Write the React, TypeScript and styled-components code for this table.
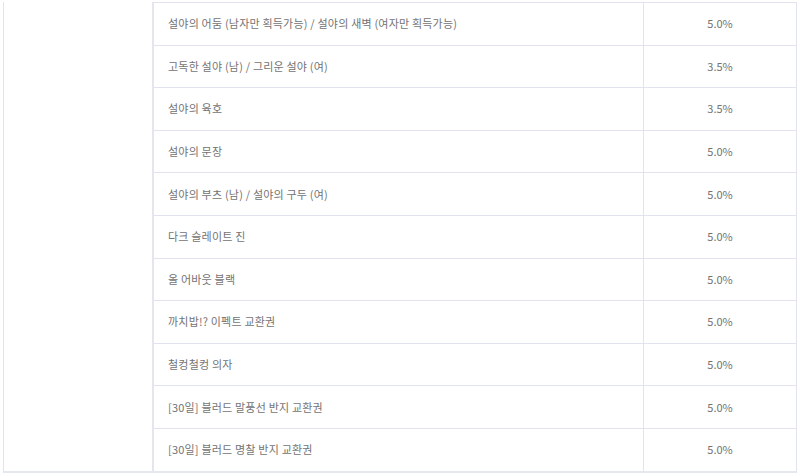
import styled, { createGlobalStyle } from "styled-components";

const GlobalStyle = createGlobalStyle`
  html, body {
    margin: 0;
    padding: 0;
    background: #fff;
  }
  body {
    font-family: "Noto Sans CJK KR", "Noto Sans", sans-serif;
  }
`;

type rateType = { name: string, rate: string }

const rates: rateType[] = [
  { name: "설야의 어둠 (남자만 획득가능) / 설야의 새벽 (여자만 획득가능)", rate: "5.0%" },
  { name: "고독한 설야 (남) / 그리운 설야 (여)", rate: "3.5%" },
  { name: "설야의 육호", rate: "3.5%" },
  { name: "설야의 문장", rate: "5.0%" },
  { name: "설야의 부츠 (남) / 설야의 구두 (여)", rate: "5.0%" },
  { name: "다크 슬레이트 진", rate: "5.0%" },
  { name: "올 어바웃 블랙", rate: "5.0%" },
  { name: "까치밥!? 이펙트 교환권", rate: "5.0%" },
  { name: "철컹철컹 의자", rate: "5.0%" },
  { name: "[30일] 블러드 말풍선 반지 교환권", rate: "5.0%" },
  { name: "[30일] 블러드 명찰 반지 교환권", rate: "5.0%" },
];

const App = (): JSX.Element => {
  return (
    <Page>
      <GlobalStyle />
      <Table>
        <Side />
        <List>
          {rates.map((data) => (
            <Row key={data.name}>
              <Name>{data.name}</Name>
              <Rate>{data.rate}</Rate>
            </Row>
          ))}
        </List>
      </Table>
    </Page>
  );
};

export default App;

const Page = styled.div`
  width: 800px;
  height: 476px;
  padding: 2px 0 0 3px;
  box-sizing: border-box;
  overflow: hidden;
`
const Table = styled.div`
  display: flex;
  width: 794px;
  border-left: 1px solid #e1e4ee;
  border-right: 1px solid #e1e4ee;
  border-bottom: 2px solid #e6e8f0;
  box-sizing: border-box;
`
const Side = styled.div`
  width: 148px;
  flex-shrink: 0;
  border-right: 2px solid #e4e6ef;
`
const List = styled.div`
  flex: 1;
  display: flex;
  flex-direction: column;
`
const Row = styled.div`
  display: grid;
  grid-template-columns: 1fr 152px;
  height: 42.6px;
  box-sizing: border-box;
  border-top: 1px solid #e1e4ee;
  font-size: 11px;
  letter-spacing: 0.2px;
  color: #737373;
`
const Name = styled.div`
  display: flex;
  align-items: center;
  padding-left: 14px;
  padding-bottom: 1px;
  white-space: nowrap;
  border-right: 1px solid #e1e4ee;
`
const Rate = styled.div`
  display: flex;
  align-items: center;
  justify-content: center;
  padding-bottom: 1px;
  letter-spacing: 0;
`
